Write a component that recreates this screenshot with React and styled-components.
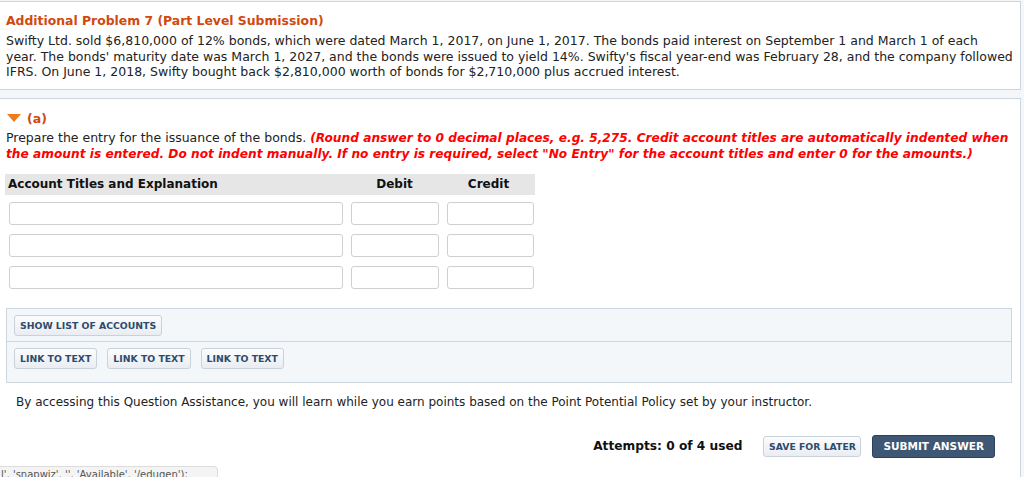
import React from "react";
import styled, { createGlobalStyle } from "styled-components";

const GlobalStyle = createGlobalStyle`
  html, body {
    margin: 0;
    padding: 0;
    background: #f4f7fa;
    font-family: "DejaVu Sans", Verdana, sans-serif;
    color: #222;
    overflow: hidden;
  }
`;

const Page = styled.div`
  width: 1024px;
  height: 477px;
  overflow: hidden;
  position: relative;
  padding-top: 1px;
  box-sizing: border-box;
`;

const Panel = styled.section`
  background: #fff;
  border: 1px solid #cdd5de;
  border-left: none;
  width: 1021px;
  box-sizing: border-box;
  margin-bottom: ${(p) => p.gap || 0}px;
  padding: ${(p) => p.pad};
`;

const Title = styled.h2`
  margin: 0 0 5px;
  font-size: 12.4px;
  font-weight: bold;
  color: #d0490f;
`;

const Body = styled.p`
  margin: 0;
  font-size: 12.5px;
  line-height: 15.5px;
  padding: ${(p) => p.pad || 0};
  white-space: ${(p) => (p.fixed ? "nowrap" : "normal")};
`;

const PartHead = styled.div`
  display: flex;
  align-items: center;
  gap: 6px;
  padding-left: 7px;
  font-size: 12.5px;
  font-weight: bold;
  color: #d0490f;
  margin-bottom: 4px;
`;

const Caret = styled.span`
  width: 0;
  height: 0;
  border-left: 7px solid transparent;
  border-right: 7px solid transparent;
  border-top: 8px solid #f07a1e;
`;

const Warn = styled.em`
  color: #f00;
  font-weight: bold;
  font-size: 12.2px;
  line-height: 15px;
`;

const Table = styled.div`
  width: 530px;
  margin: 12px 0 0 5px;
`;

const HeadRow = styled.div`
  display: grid;
  grid-template-columns: 342px 95px 93px;
  background: #e6e6e6;
  height: 21px;
  align-items: center;
  font-size: 12px;
  font-weight: bold;
  color: #111;
`;

const HeadCell = styled.div`
  text-align: ${(p) => p.align || "left"};
  padding-left: ${(p) => (p.align ? 0 : 3)}px;
`;

const Row = styled.div`
  display: grid;
  grid-template-columns: 334px 88px 87px;
  column-gap: 8px;
  padding-left: 4px;
  margin-top: ${(p) => (p.first ? 7 : 9)}px;
`;

const Field = styled.input`
  height: 23px;
  box-sizing: border-box;
  border: 1px solid #cfcfcf;
  border-radius: 3px;
  background: #fff;
  font: inherit;
`;

const Tools = styled.div`
  margin: 19px 8px 0 6px;
  border: 1px solid #cdd5de;
  background: #f4f7fa;
`;

const ToolRow = styled.div`
  display: flex;
  gap: 10px;
  padding: 6px 7px;
  border-top: ${(p) => (p.divided ? "1px solid #cdd5de" : "none")};
  padding-bottom: ${(p) => (p.divided ? 13 : 5)}px;
`;

const Btn = styled.button`
  font-family: "DejaVu Sans", Verdana, sans-serif;
  font-size: 9.3px;
  font-weight: bold;
  color: #2e4a6d;
  height: 21px;
  padding: 0 5px;
  border: 1px solid #c9d1da;
  border-radius: 3px;
  background: linear-gradient(#fbfcfd, #e9edf2);
  cursor: pointer;
`;

const Note = styled.p`
  margin: 12px 0 0 16px;
  font-size: 12px;
`;

const Footer = styled.div`
  display: flex;
  justify-content: flex-end;
  align-items: center;
  gap: 11px;
  margin: 26px 25px 0 0;
`;

const Attempts = styled.span`
  font-size: 12.2px;
  font-weight: bold;
  color: #111;
  margin-right: 10px;
`;

const Save = styled(Btn)`
  padding: 0 4.5px;
`;

const Submit = styled(Btn)`
  background: #3d5775;
  border-color: #2c4259;
  color: #fff;
  height: 23px;
  padding: 0 10px;
  font-size: 10.5px;
`;

const CodeBox = styled.div`
  position: absolute;
  left: -6px;
  top: 466px;
  width: 224px;
  height: 20px;
  background: #f4f4f4;
  border: 1px solid #ddd;
  border-radius: 4px;
  font-size: 10px;
  color: #555;
  padding: 2px 0 0 6px;
  box-sizing: border-box;
  white-space: nowrap;
  overflow: hidden;
`;

export default function App() {
  const rows = [0, 1, 2];
  return (
    <Page>
      <GlobalStyle />
      <Panel gap={8} pad="11px 2px 9px 6px">
        <Title>Additional Problem 7 (Part Level Submission)</Title>
        <Body fixed>
          Swifty Ltd. sold $6,810,000 of 12% bonds, which were dated March 1, 2017, on June 1, 2017. The bonds
          paid interest on September 1 and March 1 of each
          <br />
          year. The bonds' maturity date was March 1, 2027, and the bonds were issued to yield 14%. Swifty's
          fiscal year-end was February 28, and the company followed
          <br />
          IFRS. On June 1, 2018, Swifty bought back $2,810,000 worth of bonds for $2,710,000 plus accrued interest.
        </Body>
      </Panel>
      <Panel pad="12px 0 200px 0">
        <PartHead>
          <Caret />
          (a)
        </PartHead>
        <Body pad="0 4px 0 6px">
          Prepare the entry for the issuance of the bonds.{" "}
          <Warn>
            (Round answer to 0 decimal places, e.g. 5,275. Credit account titles are automatically indented when
            the amount is entered. Do not indent manually. If no entry is required, select "No Entry" for the
            account titles and enter 0 for the amounts.)
          </Warn>
        </Body>
        <Table>
          <HeadRow>
            <HeadCell>Account Titles and Explanation</HeadCell>
            <HeadCell align="center">Debit</HeadCell>
            <HeadCell align="center">Credit</HeadCell>
          </HeadRow>
          {rows.map((r) => (
            <Row key={r} first={r === 0}>
              <Field />
              <Field />
              <Field />
            </Row>
          ))}
        </Table>
        <Tools>
          <ToolRow>
            <Btn>SHOW LIST OF ACCOUNTS</Btn>
          </ToolRow>
          <ToolRow divided>
            <Btn>LINK TO TEXT</Btn>
            <Btn>LINK TO TEXT</Btn>
            <Btn>LINK TO TEXT</Btn>
          </ToolRow>
        </Tools>
        <Note>
          By accessing this Question Assistance, you will learn while you earn points based on the Point Potential
          Policy set by your instructor.
        </Note>
        <Footer>
          <Attempts>Attempts: 0 of 4 used</Attempts>
          <Save>SAVE FOR LATER</Save>
          <Submit>SUBMIT ANSWER</Submit>
        </Footer>
      </Panel>
      <CodeBox>l', 'snapwiz', '', 'Available', '/edugen');</CodeBox>
    </Page>
  );
}
